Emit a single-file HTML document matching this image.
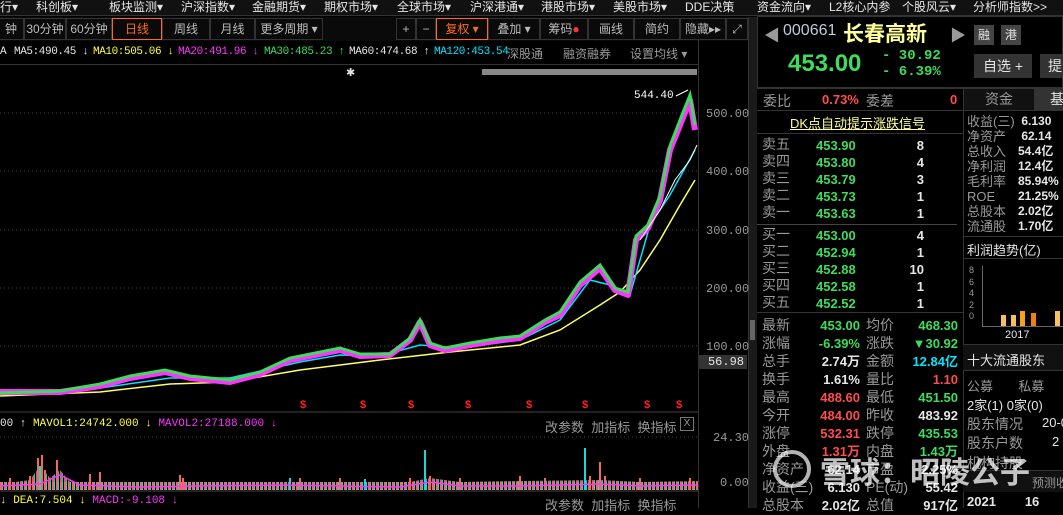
<!DOCTYPE html>
<html><head><meta charset="utf-8"><style>
*{margin:0;padding:0;box-sizing:border-box}
body{width:1063px;height:508px;background:#000;overflow:hidden;position:relative;font-family:"Liberation Sans","Noto Sans CJK SC",sans-serif;font-size:12px;color:#ccc}
.a{position:absolute;white-space:nowrap}
.m{font-family:"Liberation Mono","Noto Sans CJK SC",monospace}
.g{color:#3ddc5c}.r{color:#ff4d4d}.w{color:#e6e6e6}.c{color:#00e5ff}.y{color:#ffff33}.p{color:#ff33ff}.gr{color:#999}
.tb{position:absolute;top:18px;height:22px;border:1px solid #333;color:#bbb;font-size:12px;line-height:20px;text-align:center}
.mn{position:absolute;top:0;font-size:12px;line-height:15px;color:#e6e6e6}
.ma{position:absolute;top:46px;font-family:"Liberation Mono",monospace;font-size:11px;letter-spacing:-0.4px;white-space:nowrap}
</style></head><body>
<div class="a" style="left:0;top:0;width:1063px;height:16px;background:#111;border-bottom:1px solid #333"></div>
<div class="mn" style="left:0">行▾</div>
<div class="mn" style="left:36px">科创板▾</div>
<div class="mn" style="left:109px">板块监测▾</div>
<div class="mn" style="left:181px">沪深指数▾</div>
<div class="mn" style="left:252px">金融期货▾</div>
<div class="mn" style="left:324px">期权市场▾</div>
<div class="mn" style="left:397px">全球市场▾</div>
<div class="mn" style="left:470px">沪深港通▾</div>
<div class="mn" style="left:541px">港股市场▾</div>
<div class="mn" style="left:613px">美股市场▾</div>
<div class="mn" style="left:685px">DDE决策</div>
<div class="mn" style="left:757px">资金流向▾</div>
<div class="mn" style="left:829px">L2核心内参</div>
<div class="mn" style="left:902px">个股风云▾</div>
<div class="mn" style="left:973px">分析师指数&gt;&gt;</div>
<!-- toolbar -->
<div class="a" style="left:0;top:17px;width:750px;height:24px;background:#0a0a0a"></div>
<div class="tb" style="left:-2px;width:26px">钟</div>
<div class="tb" style="left:24px;width:42px">30分钟</div>
<div class="tb" style="left:66px;width:46px">60分钟</div>
<div class="tb" style="left:112px;width:50px;border-color:#ff6a1a;color:#ff6a1a">日线</div>
<div class="tb" style="left:162px;width:48px">周线</div>
<div class="tb" style="left:210px;width:45px">月线</div>
<div class="tb" style="left:255px;width:68px">更多周期 ▾</div>
<div class="tb" style="left:396px;width:20px">+</div>
<div class="tb" style="left:416px;width:20px">−</div>
<div class="tb" style="left:436px;width:52px;border-color:#ff6a1a;color:#ff6a1a">复权 ▾</div>
<div class="tb" style="left:488px;width:52px">叠加 ▾</div>
<div class="tb" style="left:540px;width:48px">筹码<span style="color:#f33">●</span></div>
<div class="tb" style="left:588px;width:46px">画线</div>
<div class="tb" style="left:634px;width:46px">简约</div>
<div class="tb" style="left:680px;width:46px">隐藏▸▸</div>
<div class="tb" style="left:726px;width:22px">⤢</div>
<!-- MA line -->
<div class="ma w" style="left:0">A</div>
<div class="ma w" style="left:14px">MA5:490.45 ↓</div>
<div class="ma y" style="left:93px">MA10:505.06 ↓</div>
<div class="ma p" style="left:178px">MA20:491.96 ↓</div>
<div class="ma g" style="left:264px">MA30:485.23 ↑</div>
<div class="ma w" style="left:349px">MA60:474.68 ↑</div>
<div class="ma c" style="left:434px">MA120:453.54</div>
<div class="a gr" style="left:507px;top:45px">深股通</div>
<div class="a gr" style="left:563px;top:45px">融资融券</div>
<div class="a gr" style="left:630px;top:45px">设置均线 ▾</div>
<div class="a" style="left:0;top:64px;width:698px;border-top:1px solid #333"></div>
<div class="a w" style="left:346px;top:66px;font-size:11px">✱</div>
<div class="a" style="left:482px;top:69px;width:215px;height:6px;background:#aaa;opacity:.8"></div>
<!-- axis -->
<div class="a" style="left:698px;top:40px;width:1px;height:468px;background:#333"></div>
<div class="a" style="left:748px;top:17px;width:9px;height:491px;background:#1a1a1a;border-left:1px solid #333"></div>
<div class="a" style="left:750px;top:320px;width:5px;height:20px;background:#666"></div>
<div class="a m gr" style="left:706px;top:107px">500.00</div>
<div class="a m gr" style="left:706px;top:165px">400.00</div>
<div class="a m gr" style="left:706px;top:224px">300.00</div>
<div class="a m gr" style="left:706px;top:282px">200.00</div>
<div class="a m gr" style="left:706px;top:340px">100.00</div>
<div class="a m w" style="left:699px;top:355px;width:48px;background:#333;text-align:right;padding-right:3px">56.98</div>
<svg class="a" style="left:0;top:0" width="698" height="508">
<defs>
<pattern id="st" width="4" height="30" patternUnits="userSpaceOnUse"><rect width="2" height="30" fill="#f06a5a"/><rect x="2" width="1" height="30" fill="#1ad8d8"/></pattern>
</defs>
<g stroke-dasharray="1 3" stroke="#444"><line x1="0" y1="113" x2="698" y2="113"/><line x1="0" y1="171" x2="698" y2="171"/><line x1="0" y1="230" x2="698" y2="230"/><line x1="0" y1="288" x2="698" y2="288"/><line x1="0" y1="346" x2="698" y2="346"/><line x1="0" y1="437" x2="698" y2="437"/></g>
<polyline fill="none" stroke="#ffff66" stroke-width="1.5" points="0,396 100,392 170,384 230,382 300,370 380,360 450,352 520,345 560,330 600,305 620,292 640,270 660,240 680,205 695,180"/>
<polyline fill="none" stroke="#00e5ff" stroke-width="1.5" points="0,394 100,388 170,378 230,378 300,362 340,355 380,356 420,345 460,348 520,340 560,320 590,280 610,285 630,295 650,225 670,195 695,150"/>
<polyline fill="none" stroke="#ff33ff" stroke-width="6" stroke-linejoin="round" points="0,392 60,392 100,386 130,378 165,372 190,378 230,382 260,374 290,360 340,350 360,356 390,355 410,340 420,322 430,345 445,350 470,345 500,340 520,338 545,322 560,315 580,285 600,268 615,290 628,295 636,240 648,228 660,200 670,150 680,125 690,100 695,130"/>
<polyline fill="none" stroke="#3ddc5c" stroke-width="3" points="0,393 60,391 100,384 130,376 165,370 190,376 230,380 260,372 290,358 340,348 360,354 390,354 410,338 420,320 430,343 445,348 470,343 500,338 520,336 545,320 560,312 580,282 600,265 615,288 628,292 636,236 648,225 660,196 670,146 680,120 690,95 695,125"/>
<polyline fill="none" stroke="#ffffff" stroke-width="1" points="640,240 660,210 675,180 690,160 697,145"/>
<text x="634" y="98" fill="#fff" font-size="11" font-family="Liberation Mono">544.40</text>
<line x1="676" y1="96" x2="688" y2="90" stroke="#fff"/>
<g fill="#f22" font-size="11" font-weight="bold" font-family="Liberation Sans"><text x="300" y="408">$</text><text x="360" y="408">$</text><text x="408" y="408">$</text><text x="465" y="408">$</text><text x="526" y="408">$</text><text x="582" y="408">$</text><text x="644" y="408">$</text><text x="676" y="408">$</text></g>
<line x1="0" y1="412" x2="698" y2="412" stroke="#444"/>
<line x1="0" y1="491" x2="698" y2="491" stroke="#444"/>
<rect x="0" y="482" width="698" height="8" fill="url(#st)"/>
<path d="M0 490L0 484 30 480 40 466 50 478 60 470 70 482 100 484 200 484 280 482 400 484 430 478 460 482 520 481 600 480 640 482 698 481V490Z" fill="url(#st)" opacity=".9"/>
<g stroke-width="2">
<path d="M10 490V478M30 490V476M45 490V470M90 490V474M100 490V472M180 490V475M300 490V478M340 490V478M410 490V478M430 490V476M460 490V478M520 490V476M545 490V478M590 490V476M640 490V478M690 490V478" stroke="#f06a5a"/>
<path d="M38 490V458M42 490V455M57 490V460M183 490V478M425 490V450M585 490V448M600 490V462M605 490V476" stroke="#f06a5a"/>
<path d="M40 490V466M425 490V450M585 490V448M290 490V478M365 490V479" stroke="#1ad8d8"/>
</g>
<polyline fill="none" stroke="#ff33ff" stroke-width="1.5" points="0,486 40,484 60,475 80,485 140,487 200,486 280,485 400,487 430,482 460,486 520,486 600,484 640,486 698,485"/>
</svg>
<!-- volume labels -->
<div class="a m" style="left:0;top:418px;font-size:11px"><span class="w">00 ↑ </span><span class="y">MAVOL1:24742.000 ↓ </span><span class="p">MAVOL2:27188.000 ↓</span></div>
<div class="a gr" style="left:545px;top:417px;font-size:13px">改参数&nbsp; 加指标&nbsp; 换指标</div>
<div class="a gr" style="left:680px;top:417px;width:14px;height:14px;border:1px solid #777;font-size:10px;line-height:12px;text-align:center">X</div>
<div class="a m gr" style="left:713px;top:431px">24.30</div>
<div class="a m gr" style="left:720px;top:476px">0.00</div>
<div class="a m" style="left:0;top:495px;font-size:11px"><span class="w">↓ </span><span class="y">DEA:7.504 ↓ </span><span class="p">MACD:-9.108 ↓</span></div>
<div class="a gr" style="left:545px;top:495px;font-size:13px">改参数&nbsp; 加指标&nbsp; 换指标</div>
<!-- right panel -->
<div class="a" style="left:757px;top:16px;width:306px;height:72px;border:1px solid #333"></div>
<div class="a gr" style="left:764px;top:22px;font-size:16px">◀</div>
<div class="a" style="left:783px;top:22px;font-size:16px;color:#bcd">000661</div>
<div class="a" style="left:843px;top:18px;font-size:21px;font-weight:bold;color:#ffff99">长春高新</div>
<div class="a gr" style="left:950px;top:22px;font-size:16px">▶</div>
<div class="a w" style="left:974px;top:25px;width:20px;height:20px;background:#444;text-align:center;line-height:20px">融</div>
<div class="a w" style="left:1001px;top:25px;width:20px;height:20px;background:#444;text-align:center;line-height:20px">港</div>
<div class="a g" style="left:788px;top:50px;font-size:24px;font-weight:bold">453.00</div>
<div class="a g m" style="left:882px;top:48px;font-size:14px;font-weight:bold">- 30.92</div>
<div class="a g m" style="left:882px;top:64px;font-size:14px;font-weight:bold">- 6.39%</div>
<div class="a w" style="left:974px;top:54px;width:58px;height:24px;background:#333;text-align:center;line-height:24px;font-size:14px">自选 +</div>
<div class="a w" style="left:1040px;top:54px;width:30px;height:24px;background:#333;line-height:24px;font-size:14px;padding-left:8px">提</div>
<div class="a" style="left:757px;top:88px;width:306px;height:1px;background:#333"></div>
<div class="a gr" style="left:763px;top:91px;font-size:14px">委比</div>
<div class="a r" style="left:822px;top:92px;font-size:13px;font-weight:bold">0.73%</div>
<div class="a gr" style="left:866px;top:91px;font-size:14px">委差</div>
<div class="a r" style="left:950px;top:92px;font-size:13px;font-weight:bold">0</div>
<div class="a" style="left:963px;top:88px;width:1px;height:420px;background:#333"></div>
<div class="a gr" style="left:964px;top:89px;width:70px;height:21px;text-align:center;font-size:14px;line-height:21px;background:#111">资金</div>
<div class="a w" style="left:1034px;top:89px;width:30px;height:21px;background:#333;font-size:14px;padding-left:16px;line-height:21px">基</div>
<div class="a" style="left:757px;top:110px;width:306px;height:1px;background:#333"></div>
<div class="a" style="left:790px;top:113px;font-size:13px;color:#ffff99;text-decoration:underline">DK点自动提示涨跌信号</div>
<div class="a" style="left:757px;top:133px;width:206px;height:1px;background:#333"></div>
<div class="a gr" style="left:762px;top:136px;font-size:14px;line-height:17px">卖五<br>卖四<br>卖三<br>卖二<br>卖一</div>
<div class="a g" style="left:816px;top:137px;font-size:13px;line-height:17px;font-weight:bold">453.90<br>453.80<br>453.79<br>453.73<br>453.63</div>
<div class="a w" style="left:900px;top:137px;font-size:13px;line-height:17px;width:24px;text-align:right;font-weight:bold">8<br>4<br>3<br>1<br>1</div>
<div class="a" style="left:757px;top:224px;width:200px;height:1px;background:#444"></div>
<div class="a gr" style="left:762px;top:226px;font-size:14px;line-height:17px">买一<br>买二<br>买三<br>买四<br>买五</div>
<div class="a g" style="left:816px;top:227px;font-size:13px;line-height:17px;font-weight:bold">453.00<br>452.94<br>452.88<br>452.58<br>452.52</div>
<div class="a w" style="left:900px;top:227px;font-size:13px;line-height:17px;width:24px;text-align:right;font-weight:bold">4<br>1<br>10<br>1<br>1</div>
<div class="a" style="left:757px;top:312px;width:206px;height:1px;background:#333"></div>
<div class="a gr" style="left:762px;top:316px;font-size:14px;line-height:18px">最新<br>涨幅<br>总手<br>换手<br>最高<br>今开<br>涨停<br>外盘<br>净资产<br>收益(三)<br>总股本</div>
<div class="a" style="left:800px;top:317px;font-size:13px;line-height:18px;width:60px;text-align:right;font-weight:bold"><span class="g">453.00</span><br><span class="g">-6.39%</span><br><span class="w">2.74万</span><br><span class="w">1.61%</span><br><span class="r">488.60</span><br><span class="r">484.00</span><br><span class="r">532.31</span><br><span class="r">1.31万</span><br><span class="w">62.14</span><br><span class="w">6.130</span><br><span class="w">2.02亿</span></div>
<div class="a gr" style="left:866px;top:316px;font-size:14px;line-height:18px">均价<br>涨跌<br>金额<br>量比<br>最低<br>昨收<br>跌停<br>内盘<br>市盈<br>PE(动)<br>总值</div>
<div class="a" style="left:895px;top:317px;font-size:13px;line-height:18px;width:63px;text-align:right;font-weight:bold"><span class="g">468.30</span><br><span class="g">▼30.92</span><br><span class="c">12.84亿</span><br><span class="r">1.10</span><br><span class="g">451.50</span><br><span class="w">483.92</span><br><span class="g">435.53</span><br><span class="g">1.43万</span><br><span class="w">2.25%</span><br><span class="w">55.42</span><br><span class="w">917亿</span></div>
<!-- right column -->
<div class="a gr" style="left:967px;top:114px;font-size:13px;line-height:15px">收益(三)<br>净资产<br>总收入<br>净利润<br>毛利率<br>ROE<br>总股本<br>流通股</div>
<div class="a w" style="left:1018px;top:114px;font-size:12px;line-height:15px;font-weight:bold">&nbsp;6.130<br>&nbsp;62.14<br>54.4亿<br>12.4亿<br>85.94%<br>21.25%<br>2.02亿<br>1.70亿</div>
<div class="a" style="left:963px;top:236px;width:100px;height:1px;background:#333"></div>
<div class="a w" style="left:967px;top:240px;font-size:13px">利润趋势(亿)</div>
<div class="a" style="left:963px;top:258px;width:100px;height:1px;background:#333"></div>
<div class="a gr" style="left:969px;top:265px;font-size:9px;line-height:11.5px">8<br>6<br>4<br>2<br>0</div>
<div class="a" style="left:982px;top:266px;width:81px;height:61px;border-left:1px solid #666;border-bottom:1px solid #666"></div>
<div class="a" style="left:1001px;top:315px;width:5px;height:11px;background:#f8c060"></div>
<div class="a" style="left:1011px;top:315px;width:5px;height:11px;background:#f8c060"></div>
<div class="a" style="left:1020px;top:311px;width:5px;height:15px;background:#f5a020"></div>
<div class="a" style="left:1031px;top:313px;width:5px;height:13px;background:#f08010"></div>
<div class="a" style="left:1055px;top:311px;width:5px;height:15px;background:#f8c060"></div>
<div class="a w" style="left:1005px;top:329px;font-size:11px">2017</div>
<div class="a" style="left:963px;top:344px;width:100px;height:27px;background:#111;border-top:1px solid #333;border-bottom:1px solid #333"></div>
<div class="a w" style="left:967px;top:350px;font-size:13px">十大流通股东</div>
<div class="a gr" style="left:967px;top:376px;font-size:13px">公募&nbsp;&nbsp;&nbsp;&nbsp;&nbsp;&nbsp; 私募</div>
<div class="a w" style="left:967px;top:395px;font-size:13px">2家(1) 0家(0)</div>
<div class="a gr" style="left:967px;top:414px;font-size:14px">股东情况</div>
<div class="a w" style="left:1042px;top:415px;font-size:13px">20-0</div>
<div class="a gr" style="left:967px;top:433px;font-size:14px">股东户数</div>
<div class="a w" style="left:1052px;top:434px;font-size:13px">2</div>
<div class="a gr" style="left:967px;top:453px;font-size:14px">机构持股</div>
<div class="a" style="left:963px;top:470px;width:100px;height:22px;background:#111;border-top:1px solid #333"></div>
<div class="a gr" style="left:1032px;top:474px;font-size:12px">预测收</div>
<div class="a w" style="left:967px;top:494px;font-size:13px;font-weight:bold">2021&nbsp;&nbsp;&nbsp;&nbsp;&nbsp;&nbsp;&nbsp; 16</div>
<!-- watermark -->
<div class="a" style="left:773px;top:450px;width:38px;height:38px;border:4px solid rgba(255,255,255,.7);border-radius:50%"></div>
<div class="a" style="left:820px;top:448px;font-size:30px;color:rgba(255,255,255,.75);font-weight:bold">雪球：昭陵公子</div>
</body></html>
